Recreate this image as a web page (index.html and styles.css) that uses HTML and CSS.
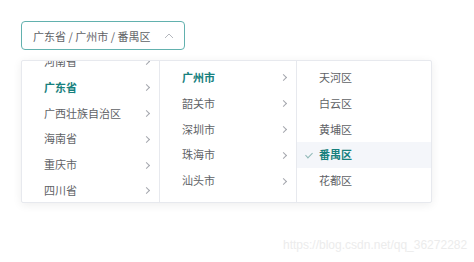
FILE: index.html
```html
<!DOCTYPE html>
<html lang="zh-CN">
	<head>
		<meta charset="utf-8">
		<meta name="viewport" content="width=device-width, initial-scale=1">
		<title>级联选择器</title>
		<link rel="stylesheet" href="styles.css">
	</head>
	<body>
		<div class="cascader">
			<span class="cascader-value">广东省 / 广州市 / 番禺区</span>
			<svg class="cascader-arrow" width="10" height="6" viewBox="0 0 10 6"><polyline points="1,5 5,1 9,5" fill="none" stroke="#b4b7bd" stroke-width="1"/></svg>
		</div>

		<div class="panel">
			<!-- province column, scrolled a little -->
			<div class="menu menu-wide">
				<ul class="menu-list menu-scrolled">
					<li class="item">河南省<i class="chev"></i></li>
					<li class="item active">广东省<i class="chev"></i></li>
					<li class="item">广西壮族自治区<i class="chev"></i></li>
					<li class="item">海南省<i class="chev"></i></li>
					<li class="item">重庆市<i class="chev"></i></li>
					<li class="item">四川省<i class="chev"></i></li>
				</ul>
			</div>
			<div class="menu">
				<ul class="menu-list">
					<li class="item active">广州市<i class="chev"></i></li>
					<li class="item">韶关市<i class="chev"></i></li>
					<li class="item">深圳市<i class="chev"></i></li>
					<li class="item">珠海市<i class="chev"></i></li>
					<li class="item">汕头市<i class="chev"></i></li>
				</ul>
			</div>
			<div class="menu menu-last">
				<ul class="menu-list">
					<li class="item">天河区</li>
					<li class="item">白云区</li>
					<li class="item">黄埔区</li>
					<li class="item active selected"><i class="check"></i>番禺区</li>
					<li class="item">花都区</li>
				</ul>
			</div>
		</div>

		<div class="watermark">https://blog.csdn.net/qq_36272282</div>
	</body>
</html>
```

FILE: styles.css
```css
body {
	margin: 0;
	background: #fff;
	font-family: "Noto Sans CJK SC", "Noto Sans", sans-serif;
	color: #606266;
	width: 474px;
	height: 262px;
	overflow: hidden;
}

/* the input */
.cascader {
	box-sizing: border-box;
	width: 164px;
	height: 29px;
	margin: 21px 0 0 21px;
	border: 1px solid #62b1ae;
	border-radius: 4px;
	display: flex;
	align-items: center;
	justify-content: space-between;
	padding: 0 10px 0 11px;
}
.cascader-value {
	font-size: 11px;
	color: #606266;
}
.cascader-arrow {
	display: block;
}

/* dropdown panel */
.panel {
	box-sizing: border-box;
	display: flex;
	width: 411px;
	height: 143px;
	margin: 10px 0 0 21px;
	border: 1px solid #e7e9ee;
	border-radius: 2px;
	box-shadow: 0 2px 10px rgba(0, 0, 0, 0.07);
	background: #fff;
}
.menu {
	width: 136px;
	height: 100%;
	border-right: 1px solid #e7e9ee;
	overflow: hidden;
}
.menu-wide {
	width: 137px;
}
.menu-last {
	border-right: none;
	flex: 1;
}
.menu-list {
	list-style: none;
	margin: 0;
	padding: 4px 0;
}
.menu-scrolled {
	margin-top: -16px;
}

.item {
	position: relative;
	height: 25.8px;
	line-height: 25.8px;
	padding: 0 24px 0 22px;
	font-size: 11px;
	color: #606266;
	display: flex;
	align-items: center;
	justify-content: space-between;
}
.item.active {
	color: #17807d;
	font-weight: bold;
}
.item.selected {
	background: #f4f6fa;
	justify-content: flex-start;
}

/* right chevron */
.chev {
	width: 4px;
	height: 4px;
	border-right: 1px solid #a3a6ac;
	border-top: 1px solid #a3a6ac;
	transform: rotate(45deg);
	margin-right: -14px;
}

/* check mark on the chosen district */
.check {
	position: absolute;
	left: 10px;
	top: 9px;
	width: 3px;
	height: 6px;
	border-right: 1px solid #8fb8b6;
	border-bottom: 1px solid #8fb8b6;
	transform: rotate(45deg);
}

.watermark {
	position: absolute;
	left: 283px;
	top: 238px;
	font-family: "Liberation Sans", Arial, sans-serif;
	font-size: 12px;
	color: #ececec;
}
```
